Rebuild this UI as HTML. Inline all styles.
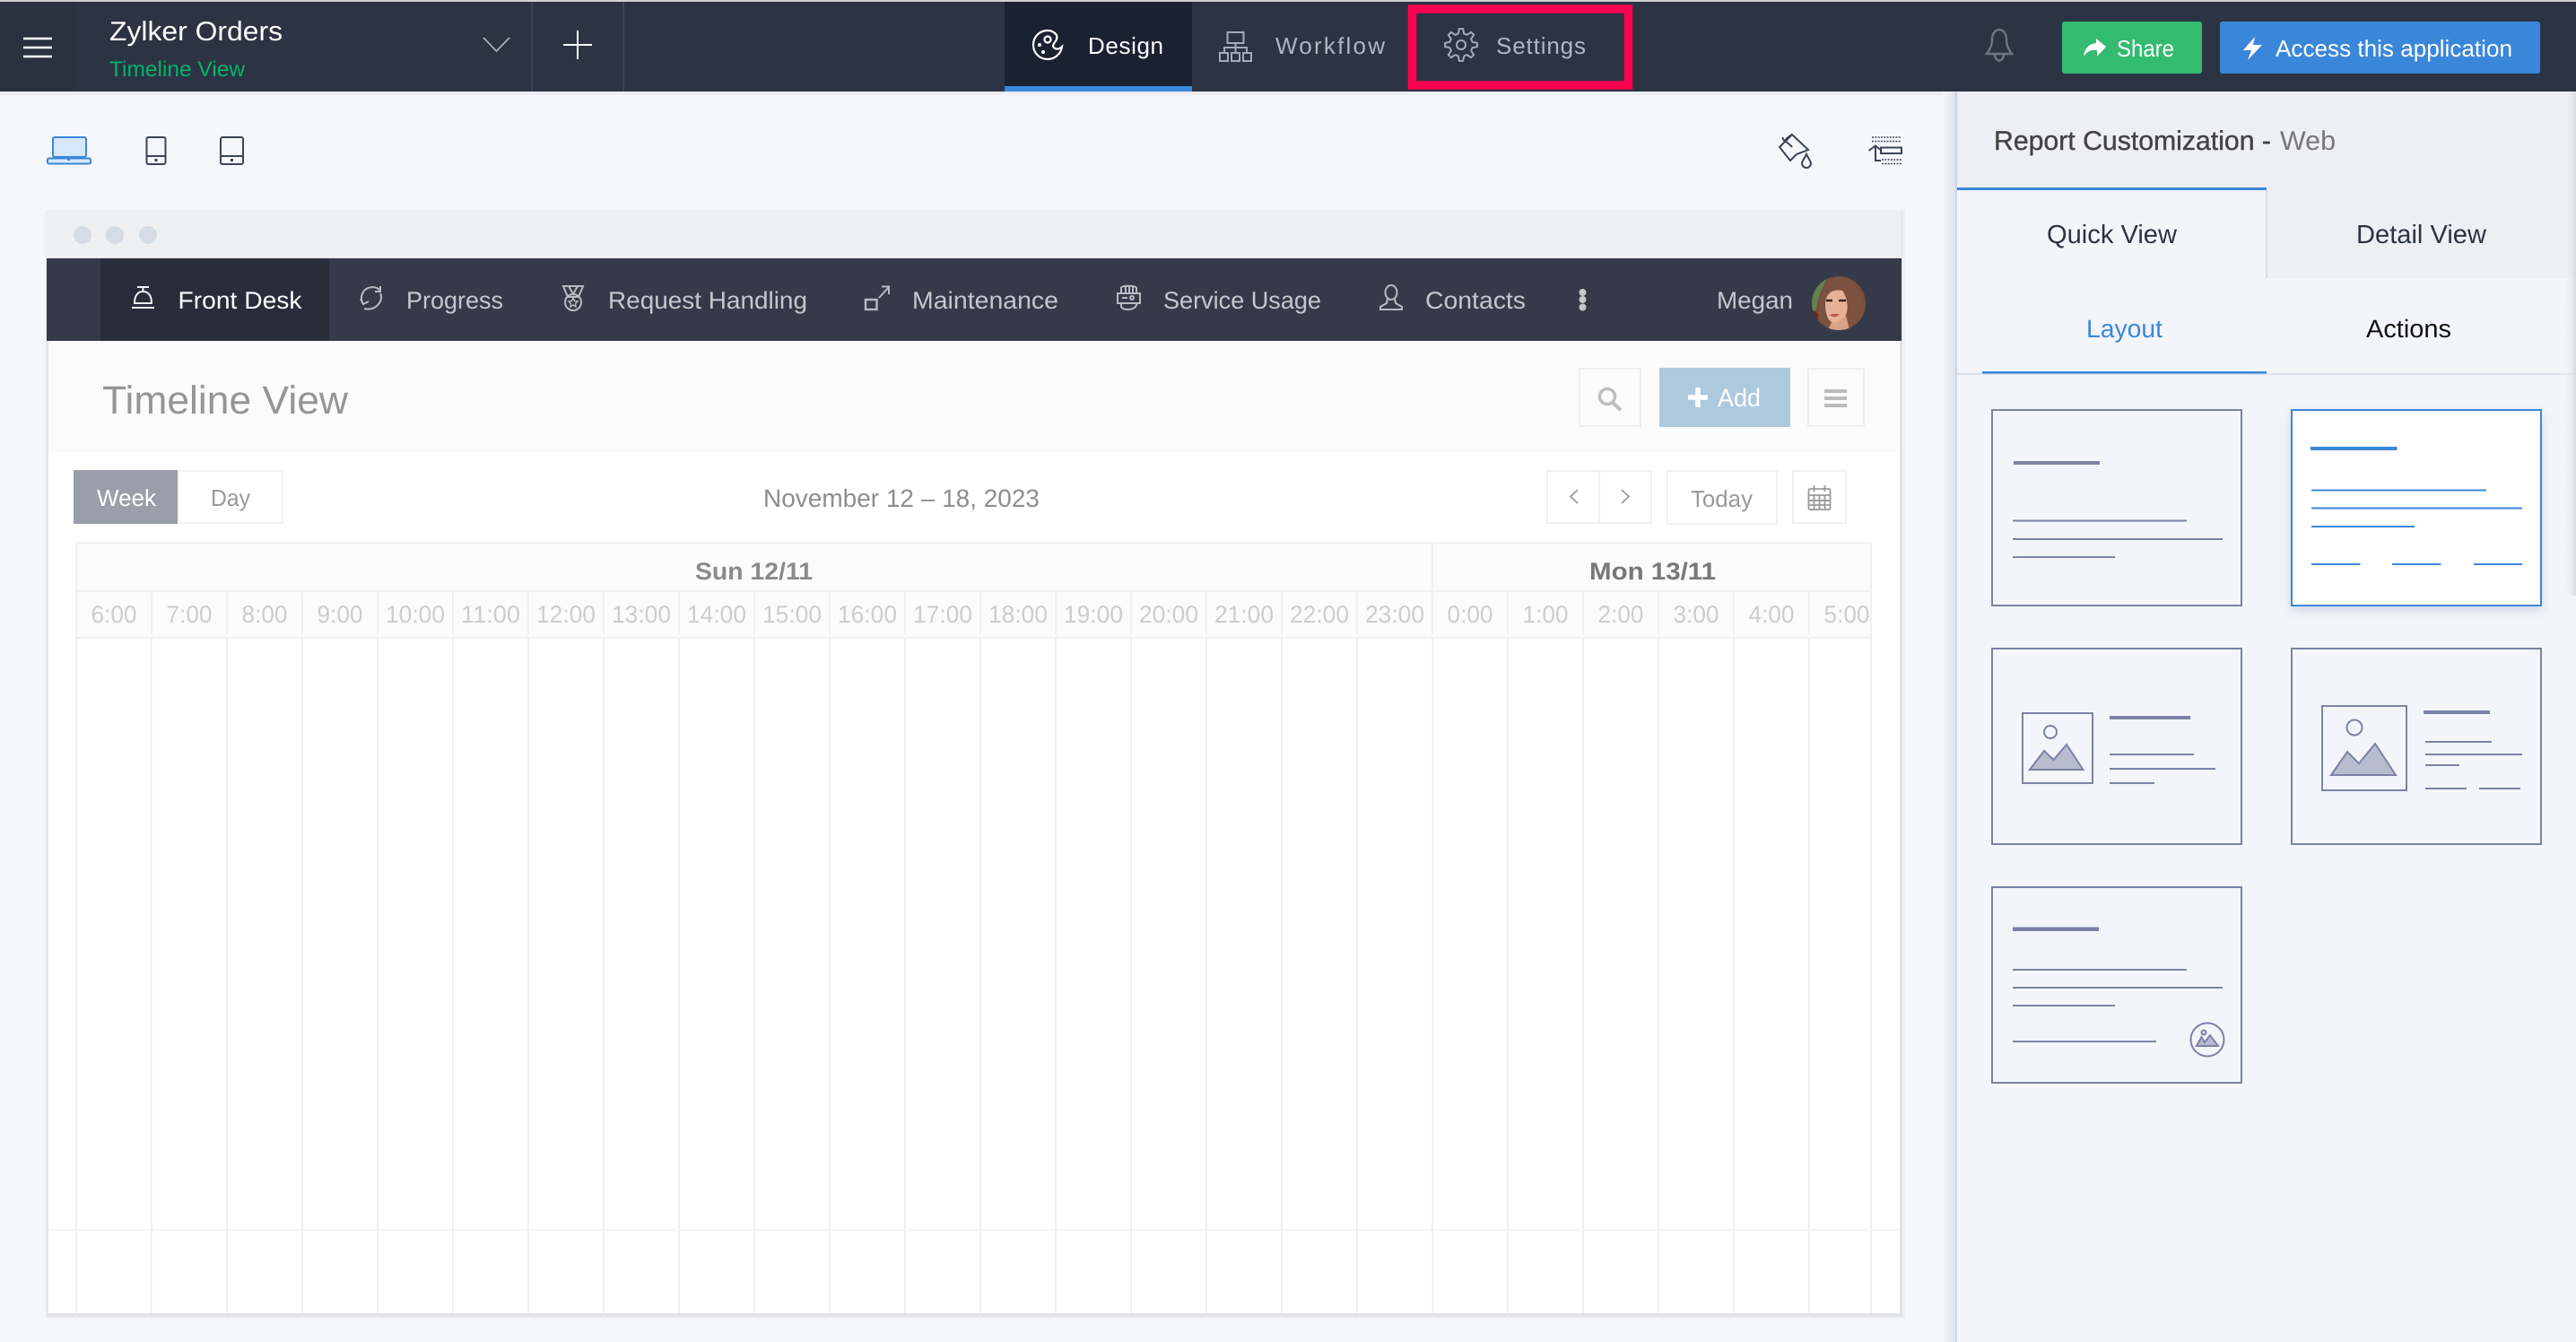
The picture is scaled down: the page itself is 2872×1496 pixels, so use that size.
<!DOCTYPE html>
<html lang="en">
<head>
<meta charset="utf-8">
<title>Zylker Orders - Timeline View</title>
<style>
html,body{margin:0;padding:0;width:2872px;height:1496px;overflow:hidden;background:#f5f7fb}
svg{display:block}
text{font-family:"Liberation Sans",sans-serif;white-space:pre}
</style>
</head>
<body>
<svg xmlns="http://www.w3.org/2000/svg" width="2872" height="1496" viewBox="0 0 2872 1496" text-rendering="geometricPrecision">
<defs>
<linearGradient id="hs" x1="0" y1="0" x2="0" y2="1"><stop offset="0" stop-color="#e6e9ef"/><stop offset="1" stop-color="#f5f7fb"/></linearGradient>
<linearGradient id="ps" x1="0" y1="0" x2="1" y2="0"><stop offset="0" stop-color="#f5f7fb"/><stop offset="1" stop-color="#dfe2ea"/></linearGradient>
<linearGradient id="rs" x1="0" y1="0" x2="1" y2="0"><stop offset="0" stop-color="#f3f5fa" stop-opacity="0"/><stop offset="1" stop-color="#d9dbe0"/></linearGradient>
<filter id="cs" x="-10%" y="-10%" width="120%" height="125%"><feDropShadow dx="0" dy="5" stdDeviation="6" flood-color="#7b82a6" flood-opacity=".28"/></filter>
<clipPath id="av"><circle cx="2050" cy="338" r="30"/></clipPath>
<path id="tooth" d="M-3.1-12.6L-2.2-17.9 2.2-17.9 3.1-12.6 6.7-11.1" fill="none" stroke="#a3abbc" stroke-width="2" stroke-linejoin="round"/>
</defs>

<!-- page -->
<rect width="2872" height="1496" fill="#f5f7fb"/>
<rect width="2872" height="2" fill="#cfcfcf"/>
<rect y="102" width="2872" height="6" fill="url(#hs)"/>

<!-- header -->
<rect y="2" width="2872" height="100" fill="#2c3342"/>
<rect y="2" width="86" height="100" fill="#2a3240"/>
<path d="M26 43H58M26 53H58M26 63H58" stroke="#fff" stroke-width="2.4" fill="none"/>
<text x="122" y="45" font-size="30" fill="#fff" textLength="193" lengthAdjust="spacingAndGlyphs">Zylker Orders</text>
<text x="122" y="85" font-size="24" fill="#00b46c" textLength="151" lengthAdjust="spacingAndGlyphs">Timeline View</text>
<path d="M539 42L553.500 57 568 42" fill="none" stroke="#a9adb5" stroke-width="1.800"/>
<rect x="592.500" y="2" width="1.500" height="100" fill="#3f4759"/>
<rect x="694.500" y="2" width="1.500" height="100" fill="#3f4759"/>
<path d="M628 50H660M644 34V66" stroke="#fff" stroke-width="2" fill="none"/>

<!-- design tab -->
<rect x="1120" y="2" width="209" height="100" fill="#1a2130"/>
<rect x="1120" y="96" width="209" height="6" fill="#3a87da"/>
<g fill="none" stroke="#fff" stroke-width="2.200">
<path d="M1178 39C1175 35 1171 34 1168 34C1159 34 1152 41 1152 50C1152 59 1159 66 1168 66C1176 66 1183 60 1184 52C1180 56 1175 55 1174 51C1174 48 1180 45 1178 39Z"/>
<circle cx="1168" cy="44" r="3.500"/>
</g>
<circle cx="1159" cy="50" r="2" fill="#fff"/><circle cx="1163" cy="58" r="2" fill="#fff"/>
<text x="1213" y="60" font-size="26" fill="#fff" textLength="84" lengthAdjust="spacing">Design</text>

<!-- workflow -->
<g fill="none" stroke="#a3abbc" stroke-width="2">
<rect x="1368.500" y="36" width="18" height="12"/>
<path d="M1377.500 48V58M1365 58V53H1390V58"/>
<rect x="1360" y="59" width="9" height="9"/><rect x="1373" y="59" width="9" height="9"/><rect x="1386" y="59" width="9" height="9"/>
</g>
<text x="1422" y="60" font-size="26" fill="#aeb6c6" textLength="122" lengthAdjust="spacing">Workflow</text>

<!-- settings -->
<g transform="translate(1629 50)">
<use href="#tooth"/><use href="#tooth" transform="rotate(45)"/><use href="#tooth" transform="rotate(90)"/><use href="#tooth" transform="rotate(135)"/><use href="#tooth" transform="rotate(180)"/><use href="#tooth" transform="rotate(225)"/><use href="#tooth" transform="rotate(270)"/><use href="#tooth" transform="rotate(315)"/>
<circle r="5" fill="none" stroke="#a3abbc" stroke-width="2"/>
</g>
<text x="1668" y="60" font-size="26" fill="#aeb6c6" textLength="100" lengthAdjust="spacing">Settings</text>
<rect x="1574.500" y="10" width="241" height="85" fill="none" stroke="#fe0052" stroke-width="9.500"/>

<!-- bell + buttons -->
<g fill="none" stroke="#6e7683" stroke-width="2.400">
<path d="M2215 60C2219 55 2221 50 2221 44C2221 37 2225 33 2229 33C2233 33 2237 37 2237 44C2237 50 2239 55 2243 60Z"/>
<path d="M2224 60C2224 70 2234 70 2234 60"/>
</g>
<rect x="2299" y="24" width="156" height="58" rx="3" fill="#33bb6f"/>
<path d="M2323 63C2324 54 2329 49 2337 48V43L2348 52L2338 63V56C2332 55 2327 57 2323 63Z" fill="#fff"/>
<text x="2360" y="63" font-size="26" fill="#fff" textLength="64" lengthAdjust="spacingAndGlyphs">Share</text>
<rect x="2475" y="24" width="357" height="58" rx="3" fill="#3a87da"/>
<path d="M2514 41L2501 56H2510L2506 67L2522 50H2512Z" fill="#fff"/>
<text x="2537" y="63" font-size="26" fill="#fff" textLength="264" lengthAdjust="spacingAndGlyphs">Access this application</text>

<!-- device icons -->
<rect x="59" y="153" width="37" height="22" rx="2" fill="#d6e7fc" stroke="#3a87da" stroke-width="2"/>
<rect x="53" y="176.500" width="48" height="6" rx="1.500" fill="#d6e7fc" stroke="#3a87da" stroke-width="2"/>
<rect x="75" y="176" width="3" height="3" fill="#3a87da"/>
<g fill="none" stroke="#3c4356" stroke-width="2">
<rect x="163.500" y="153" width="21" height="30" rx="2"/><path d="M163.500 174H184.500"/>
<rect x="246" y="153" width="25" height="30" rx="2"/><path d="M246 174H271"/>
</g>
<rect x="172.500" y="177" width="3" height="3" fill="#3c4356"/><rect x="257" y="177" width="3" height="3" fill="#3c4356"/>

<!-- paint bucket / indent icons -->
<g fill="none" stroke="#3c4356" stroke-width="2">
<path d="M1984 164L1998 150L2016 167L2003 172L1996 179Z"/>
<path d="M1988 153C1986 156 1993 158 1998 164M1989 158C1992 154 1996 151 1998 150"/>
<path d="M2014 172C2011 178 2009 180 2009 182A5 5 0 0 0 2019 182C2019 180 2017 178 2014 172Z"/>
<rect x="2097" y="164.500" width="23" height="6.500"/>
<path d="M2083.500 168L2091 162.500L2098 168M2091 163V179H2097"/>
<path d="M2087 153H2120M2087 157.500H2120M2098 178H2120M2098 182.500H2120" stroke-dasharray="2 1.300" stroke-width="1.600"/>
</g>

<!-- preview card -->
<rect x="50" y="234" width="2074" height="1236" fill="#eef0f4"/>
<rect x="52" y="236" width="2069" height="1232" fill="#e2e3e5"/>
<rect x="52" y="236" width="2068" height="51" fill="#eeeff3"/>
<circle cx="92" cy="262" r="10" fill="#d5dce5"/><circle cx="128" cy="262" r="10" fill="#d5dce5"/><circle cx="165" cy="262" r="10" fill="#d5dce5"/>
<rect x="52" y="288" width="2068" height="92" fill="#343a4a"/>
<rect x="112" y="288" width="255" height="92" fill="#272d39"/>

<!-- nav -->
<g fill="none" stroke="#f2f2f2" stroke-width="2">
<path d="M153 320H166M159.500 320V325M150 338C150 329 154 325 159.500 325C165 325 169 329 169 338ZM147 343H172"/>
</g>
<text x="198.500" y="344" font-size="27" fill="#fff" textLength="138" lengthAdjust="spacingAndGlyphs">Front Desk</text>

<g fill="none" stroke="#b8bbc2" stroke-width="2">
<path d="M424 324C420 319 412 319 407 323C402 328 402 335 405 339M406 344C410 345 416 345 420 341C425 337 426 331 424 327"/>
<path d="M424 319V325H418M402 333L405 339L411 336"/>
<path d="M628 319H650L645 331H633ZM634 319L639 328L644 319"/>
<circle cx="639" cy="337" r="9"/>
<path d="M639 332L640.500 335.500 644 336 641.500 338.500 642 342 639 340 636 342 636.500 338.500 634 336 637.500 335.500Z" stroke-width="1.400"/>
<rect x="965" y="334" width="12.500" height="11" stroke-width="2.400"/>
<path d="M980 332L991 320M983 319.500H991V328"/>
<path d="M1246 327H1271V338H1246ZM1250 327V321C1250 318 1266 318 1267 321V327M1255 319V326M1259 319V326M1263 319V326"/>
<path d="M1250 338V342C1252 346 1262 346 1266 342L1268 338"/>
<path d="M1251 332H1257"/><circle cx="1262" cy="332" r="2"/>
<ellipse cx="1551" cy="326" rx="6.500" ry="8"/>
<path d="M1547 333L1546 338L1539 342V345H1563V342L1556 338L1555 333"/>
</g>
<g font-size="27" fill="#c5c7cc">
<text x="453" y="344" textLength="108" lengthAdjust="spacingAndGlyphs">Progress</text>
<text x="678" y="344" textLength="222" lengthAdjust="spacingAndGlyphs">Request Handling</text>
<text x="1017" y="344" textLength="163" lengthAdjust="spacingAndGlyphs">Maintenance</text>
<text x="1297" y="344" textLength="176" lengthAdjust="spacingAndGlyphs">Service Usage</text>
<text x="1589" y="344" textLength="112" lengthAdjust="spacingAndGlyphs">Contacts</text>
<text x="1914" y="344" textLength="85" lengthAdjust="spacingAndGlyphs">Megan</text>
</g>
<circle cx="1764.500" cy="326" r="4" fill="#c5c7cc"/><circle cx="1764.500" cy="334" r="4" fill="#c5c7cc"/><circle cx="1764.500" cy="342.500" r="4" fill="#c5c7cc"/>

<!-- avatar -->
<g clip-path="url(#av)">
<rect x="2020" y="308" width="60" height="60" fill="#7a4c3a"/>
<path d="M2020 308H2038L2028 330L2023 352L2020 352Z" fill="#64804e"/>
<path d="M2020 345L2028 350L2036 368H2020Z" fill="#5e2a1c"/>
<path d="M2028 368C2024 340 2030 312 2050 309C2070 309 2080 330 2082 368Z" fill="#7d5140"/>
<path d="M2035 338C2036 326 2044 322 2054 324C2060 332 2061 345 2058 351C2054 358 2047 362 2042 359C2037 356 2035 348 2035 338Z" fill="#e6b197"/>
<path d="M2038 368L2042 359C2047 362 2054 358 2058 351L2062 368Z" fill="#d9a286"/>
<path d="M2036 335H2043M2050 335H2058" stroke="#3b2620" stroke-width="2.400"/>
<path d="M2040 351C2044 349 2048 350 2051 350C2048 354 2043 354 2040 351Z" fill="#b9574f"/>
</g>

<!-- card content -->
<rect x="54" y="380" width="2064" height="124" fill="#fbfbfb"/>
<rect x="54" y="504" width="2064" height="960" fill="#fff"/>
<text x="114" y="461" font-size="44" fill="#959595" textLength="274" lengthAdjust="spacingAndGlyphs">Timeline View</text>

<g fill="none" stroke="#eeeeee" stroke-width="2">
<rect x="1761" y="411" width="68" height="64"/>
<rect x="2016" y="411" width="62" height="64"/>
</g>
<circle cx="1792" cy="442" r="8.500" fill="none" stroke="#bdbdbd" stroke-width="3.500"/>
<path d="M1798 449L1807 457" stroke="#bdbdbd" stroke-width="4" fill="none"/>
<rect x="1850" y="410" width="146" height="66" fill="#adc9de"/>
<path d="M1893 432V454M1882 443H1904" stroke="#fff" stroke-width="5.500" fill="none"/>
<text x="1915" y="453" font-size="28" fill="#fff" textLength="48" lengthAdjust="spacingAndGlyphs">Add</text>
<rect x="2034" y="434" width="25" height="4" fill="#bbb"/><rect x="2034" y="442" width="25" height="4" fill="#bbb"/><rect x="2034" y="450" width="25" height="4" fill="#bbb"/>

<!-- toolbar -->
<rect x="82" y="524" width="116" height="60" fill="#9a9ea8"/>
<rect x="199" y="525" width="116" height="58" fill="#fff" stroke="#f2f2f2" stroke-width="2"/>
<text x="108" y="564" font-size="26" fill="#fff" textLength="66" lengthAdjust="spacingAndGlyphs">Week</text>
<text x="235" y="564" font-size="26" fill="#9a9a9a" textLength="44" lengthAdjust="spacingAndGlyphs">Day</text>
<text x="851" y="565" font-size="28" fill="#8e8e8e" textLength="308" lengthAdjust="spacingAndGlyphs">November 12 – 18, 2023</text>
<g fill="none" stroke="#f0f0f0" stroke-width="2">
<rect x="1725" y="525" width="116" height="58"/><path d="M1783 525V583"/>
<rect x="1859" y="525" width="122" height="59"/>
<rect x="1999" y="525" width="59" height="58"/>
</g>
<path d="M1759 546L1751 553.500L1759 561M1808 546L1816 553.500L1808 561" fill="none" stroke="#999" stroke-width="1.800"/>
<text x="1885" y="565" font-size="26" fill="#999" textLength="69" lengthAdjust="spacingAndGlyphs">Today</text>
<g fill="none" stroke="#9a9a9a" stroke-width="1.800">
<rect x="2016.500" y="545" width="24" height="23" rx="1.500"/>
<path d="M2016.500 552H2040.500M2016.500 558H2040.500M2016.500 563H2040.500M2022.500 552V568M2028.500 552V568M2034.500 552V568M2022.500 541V548M2034.500 541V548"/>
</g>

<!-- timeline table -->
<rect x="84" y="604" width="2003" height="108" fill="#fbfbfb"/>
<path d="M84 605H2087M84 659H2087M84 711H2087" stroke="#f0f0f0" stroke-width="2" fill="none"/>
<path d="M85 604V1464M169 660V708M253 660V708M337 660V708M421 660V708M505 660V708M589 660V708M673 660V708M757 660V708M841 660V708M925 660V708M1009 660V708M1093 660V708M1177 660V708M1261 660V708M1345 660V708M1429 660V708M1513 660V708M1597 604V708M1681 660V708M1765 660V708M1849 660V708M1933 660V708M2017 660V708M2086 604V1464M169 712V1464M253 712V1464M337 712V1464M421 712V1464M505 712V1464M589 712V1464M673 712V1464M757 712V1464M841 712V1464M925 712V1464M1009 712V1464M1093 712V1464M1177 712V1464M1261 712V1464M1345 712V1464M1429 712V1464M1513 712V1464M1597 712V1464M1681 712V1464M1765 712V1464M1849 712V1464M1933 712V1464M2017 712V1464" stroke="#f0f0f0" stroke-width="2" fill="none"/>
<rect x="54" y="1370" width="2064" height="2" fill="#f4f4f4"/>
<text x="775" y="646" font-size="27" font-weight="700" fill="#8a8a8a" textLength="131" lengthAdjust="spacingAndGlyphs">Sun 12/11</text>
<text x="1772" y="646" font-size="27" font-weight="700" fill="#777" textLength="141" lengthAdjust="spacingAndGlyphs">Mon 13/11</text>
<g font-size="27" fill="#cdcdcd" text-anchor="middle">
<text x="127" y="694" textLength="51" lengthAdjust="spacingAndGlyphs">6:00</text>
<text x="211" y="694" textLength="51" lengthAdjust="spacingAndGlyphs">7:00</text>
<text x="295" y="694" textLength="51" lengthAdjust="spacingAndGlyphs">8:00</text>
<text x="379" y="694" textLength="51" lengthAdjust="spacingAndGlyphs">9:00</text>
<text x="463" y="694" textLength="66" lengthAdjust="spacingAndGlyphs">10:00</text>
<text x="547" y="694" textLength="66" lengthAdjust="spacingAndGlyphs">11:00</text>
<text x="631" y="694" textLength="66" lengthAdjust="spacingAndGlyphs">12:00</text>
<text x="715" y="694" textLength="66" lengthAdjust="spacingAndGlyphs">13:00</text>
<text x="799" y="694" textLength="66" lengthAdjust="spacingAndGlyphs">14:00</text>
<text x="883" y="694" textLength="66" lengthAdjust="spacingAndGlyphs">15:00</text>
<text x="967" y="694" textLength="66" lengthAdjust="spacingAndGlyphs">16:00</text>
<text x="1051" y="694" textLength="66" lengthAdjust="spacingAndGlyphs">17:00</text>
<text x="1135" y="694" textLength="66" lengthAdjust="spacingAndGlyphs">18:00</text>
<text x="1219" y="694" textLength="66" lengthAdjust="spacingAndGlyphs">19:00</text>
<text x="1303" y="694" textLength="66" lengthAdjust="spacingAndGlyphs">20:00</text>
<text x="1387" y="694" textLength="66" lengthAdjust="spacingAndGlyphs">21:00</text>
<text x="1471" y="694" textLength="66" lengthAdjust="spacingAndGlyphs">22:00</text>
<text x="1555" y="694" textLength="66" lengthAdjust="spacingAndGlyphs">23:00</text>
<text x="1639" y="694" textLength="51" lengthAdjust="spacingAndGlyphs">0:00</text>
<text x="1723" y="694" textLength="51" lengthAdjust="spacingAndGlyphs">1:00</text>
<text x="1807" y="694" textLength="51" lengthAdjust="spacingAndGlyphs">2:00</text>
<text x="1891" y="694" textLength="51" lengthAdjust="spacingAndGlyphs">3:00</text>
<text x="1975" y="694" textLength="51" lengthAdjust="spacingAndGlyphs">4:00</text>
<text x="2059" y="694" textLength="51" lengthAdjust="spacingAndGlyphs">5:00</text>
</g>

<!-- right panel -->
<rect x="2166" y="102" width="14" height="1394" fill="url(#ps)"/>
<rect x="2180" y="102" width="692" height="1394" fill="#f3f5fa"/>
<rect x="2180" y="102" width="2" height="1394" fill="#ccd4e8"/>
<rect x="2182" y="102" width="690" height="107" fill="#eeeff4"/>
<text x="2223" y="167" font-size="30" fill="#444" stroke="#444" stroke-width=".4" textLength="309" lengthAdjust="spacingAndGlyphs">Report Customization -</text>
<text x="2542" y="167" font-size="30" fill="#777" textLength="62" lengthAdjust="spacingAndGlyphs">Web</text>
<rect x="2527" y="209" width="345" height="101" fill="#eeeff4"/>
<rect x="2182" y="209" width="345" height="3" fill="#3a87da"/>
<rect x="2526" y="212" width="2" height="98" fill="#d6deee"/>
<text x="2282" y="271" font-size="29" fill="#2c3342" textLength="145" lengthAdjust="spacingAndGlyphs">Quick View</text>
<text x="2627" y="271" font-size="29" fill="#2c3342" textLength="145" lengthAdjust="spacingAndGlyphs">Detail View</text>
<text x="2326" y="376" font-size="28" fill="#3a87da" textLength="85" lengthAdjust="spacingAndGlyphs">Layout</text>
<text x="2638" y="376" font-size="28" fill="#111" textLength="95" lengthAdjust="spacingAndGlyphs">Actions</text>
<rect x="2182" y="416" width="690" height="2" fill="#dde2f0"/>
<rect x="2210" y="414" width="317" height="2.500" fill="#3a87da"/>
<rect x="2858" y="102" width="14" height="562" fill="url(#rs)"/>

<!-- layout thumbnails -->
<g fill="none" stroke="#7b82a6" stroke-width="2">
<rect x="2221" y="457" width="278" height="218"/>
<rect x="2221" y="723" width="278" height="218"/>
<rect x="2555" y="723" width="278" height="218"/>
<rect x="2221" y="989" width="278" height="218"/>
</g>
<rect x="2555" y="457" width="278" height="218" fill="#fff" stroke="#3a87da" stroke-width="2" filter="url(#cs)"/>

<g fill="#7b82a6">
<rect x="2245" y="514" width="96" height="4"/>
<rect x="2244" y="579.500" width="194" height="2"/>
<rect x="2244" y="600" width="234" height="2"/>
<rect x="2244" y="620" width="114" height="2"/>

<rect x="2352" y="798" width="90" height="4"/>
<rect x="2352" y="840" width="94" height="2"/>
<rect x="2352" y="856" width="118" height="2"/>
<rect x="2352" y="872" width="50" height="2"/>

<rect x="2702" y="792" width="74" height="4"/>
<rect x="2704" y="826" width="74" height="2"/>
<rect x="2704" y="840" width="108" height="2"/>
<rect x="2704" y="852" width="38" height="2"/>
<rect x="2704" y="878" width="46" height="2"/>
<rect x="2764" y="878" width="46" height="2"/>

<rect x="2244" y="1033.500" width="96" height="4.500"/>
<rect x="2244" y="1080" width="194" height="2"/>
<rect x="2244" y="1100" width="234" height="2"/>
<rect x="2244" y="1120" width="114" height="2"/>
<rect x="2244" y="1160" width="160" height="2"/>
</g>

<g fill="#3a87da">
<rect x="2576" y="498" width="96.500" height="4"/>
<rect x="2577" y="545.500" width="195" height="2"/>
<rect x="2577" y="565.500" width="235" height="2"/>
<rect x="2577" y="586" width="115" height="2"/>
<rect x="2577" y="628" width="54.500" height="2"/>
<rect x="2667" y="628" width="54.500" height="2"/>
<rect x="2758" y="628" width="54" height="2"/>
</g>

<g fill="none" stroke="#7b82a6" stroke-width="2">
<rect x="2255" y="795" width="78" height="78"/>
<circle cx="2286" cy="816" r="7"/>
<path d="M2263 858L2279 837L2289.500 847L2304 830L2322.500 858Z" fill="#b7bccf"/>
<rect x="2589" y="787" width="94" height="94"/>
<circle cx="2625" cy="811" r="8.500"/>
<path d="M2599 864L2617 838L2630 851L2648 829L2671 864Z" fill="#b7bccf"/>
<circle cx="2461" cy="1159" r="18.500"/>
<circle cx="2457" cy="1151" r="2.500"/>
<path d="M2449 1166L2454.500 1156L2458 1162L2464 1154L2473 1166Z" fill="#b7bccf"/>
</g>
</svg>
</body>
</html>
